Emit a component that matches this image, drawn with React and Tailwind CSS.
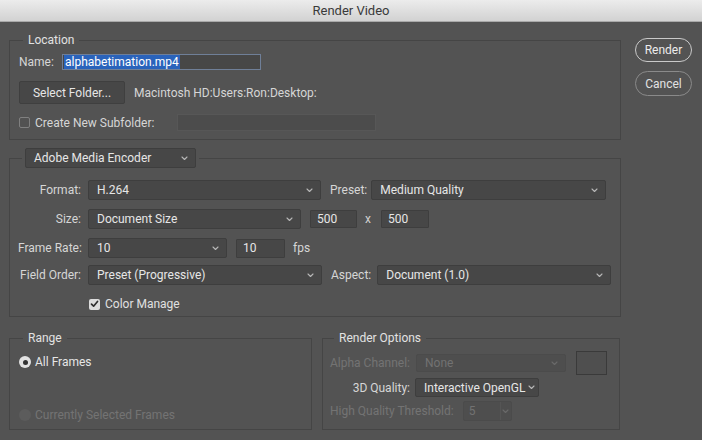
import React from "react";

const Chevron = ({ dim }) => (
  <svg width="7" height="5" viewBox="0 0 7 5" fill="none" className="shrink-0">
    <path
      d="M1 1l2.5 2.5L6 1"
      stroke={dim ? "#6a6a6a" : "#b8b8b8"}
      strokeWidth="1.1"
      strokeLinecap="round"
      strokeLinejoin="round"
    />
  </svg>
);

const Select = ({ value, className = "", disabled }) => (
  <div
    className={`flex shrink-0 items-center justify-between gap-[3px] rounded-[2px] border pl-[8px] pr-[7px] ${
      disabled
        ? "border-[#4b4b4b] bg-[#4e4e4e] text-[#727272]"
        : "border-[#3e3e3e] bg-[#474747] text-[#e6e6e6]"
    } ${className}`}
  >
    <span className="whitespace-nowrap">{value}</span>
    <Chevron dim={disabled} />
  </div>
);

const Field = ({ value, className = "" }) => (
  <div
    className={`flex shrink-0 items-center rounded-[1px] border border-[#3e3e3e] bg-[#474747] pl-[6px] text-[#e6e6e6] ${className}`}
  >
    {value}
  </div>
);

const Label = ({ children, className = "" }) => (
  <span className={`shrink-0 whitespace-nowrap text-right text-[#d6d6d6] ${className}`}>{children}</span>
);

const Checkbox = ({ checked }) =>
  checked ? (
    <div className="flex h-[11px] w-[11px] shrink-0 items-center justify-center rounded-[2px] bg-[#dcdcdc]">
      <svg width="9" height="8" viewBox="0 0 9 8" fill="none">
        <path d="M1.5 4.2L3.6 6.2L7.5 1.5" stroke="#2e2e2e" strokeWidth="1.7" strokeLinecap="round" strokeLinejoin="round" />
      </svg>
    </div>
  ) : (
    <div className="h-[11px] w-[11px] shrink-0 rounded-[2px] border border-[#808080] bg-[#525252]" />
  );

const Radio = ({ checked }) =>
  checked ? (
    <div className="flex h-[12px] w-[12px] shrink-0 items-center justify-center rounded-full bg-[#e2e2e2]">
      <div className="h-[5px] w-[5px] rounded-full bg-[#333333]" />
    </div>
  ) : (
    <div className="h-[12px] w-[12px] shrink-0 rounded-full bg-[#5c5c5c]" />
  );

const Legend = ({ children }) => (
  <legend className="ml-[4px] px-[5px] leading-[14px] text-[#e2e2e2]">{children}</legend>
);

export default function App() {
  return (
    <div className="h-[440px] w-[702px] overflow-hidden bg-[#535353] font-['Roboto',sans-serif] text-[12px] text-[#e2e2e2]">
      {/* title bar */}
      <div className="flex h-[22px] items-center justify-center border-b border-[#a9a9a9] bg-gradient-to-b from-[#ececec] to-[#d2d2d2] text-[13px] text-[#3a3a3a]">
        Render Video
      </div>

      <div className="flex pl-[9px]">
        <div className="flex w-[612px] flex-col">
          {/* Location */}
          <fieldset className="mt-[11px] border border-[#454545] pb-[8px] pl-[9px] pt-[7px]">
            <Legend>Location</Legend>
            <div className="flex h-[16px] items-center">
              <span className="w-[43px] shrink-0 text-[#d6d6d6]">Name:</span>
              <div className="flex h-[16px] w-[199px] items-center border border-[#6f7f98] bg-[#474747] pl-[1px]">
                <span className="bg-[#2a63bb] px-[1px] leading-[14px] text-white">alphabetimation.mp4</span>
              </div>
            </div>
            <div className="mt-[11px] flex h-[23px] items-center">
              <div className="flex h-[23px] w-[106px] items-center justify-center rounded-[2px] border border-[#3f3f3f] bg-[#474747] text-[#e6e6e6]">
                Select Folder...
              </div>
              <span className="ml-[9px] text-[#d6d6d6]">Macintosh HD:Users:Ron:Desktop:</span>
            </div>
            <div className="mt-[10px] flex h-[17px] items-center">
              <Checkbox />
              <span className="ml-[5px] w-[142px] shrink-0 text-[#d6d6d6]">Create New Subfolder:</span>
              <div className="h-[17px] w-[199px] border border-[#575757] bg-[#4c4c4c]" />
            </div>
          </fieldset>

          {/* Encoder settings */}
          <fieldset className="mt-[8px] border border-[#454545] pb-[5px] pl-[9px] pt-[12px]">
            <legend className="ml-[3px] px-[3px]">
              <Select value="Adobe Media Encoder" className="h-[20px] w-[171px]" />
            </legend>
            <div className="flex h-[20px] items-center">
              <Label className="w-[62px]">Format:</Label>
              <Select value="H.264" className="ml-[7px] h-[20px] w-[233px]" />
              <Label className="ml-[9px]">Preset:</Label>
              <Select value="Medium Quality" className="ml-[4px] h-[20px] w-[235px]" />
            </div>
            <div className="mt-[9px] flex h-[20px] items-center">
              <Label className="w-[62px]">Size:</Label>
              <Select value="Document Size" className="ml-[7px] h-[20px] w-[213px]" />
              <Field value="500" className="ml-[9px] h-[18px] w-[47px]" />
              <span className="ml-[8px] text-[#cfcfcf]">x</span>
              <Field value="500" className="ml-[10px] h-[18px] w-[48px]" />
            </div>
            <div className="mt-[9px] flex h-[20px] items-center">
              <Label className="-ml-[1px] w-[63px]">Frame Rate:</Label>
              <Select value="10" className="ml-[7px] h-[20px] w-[139px]" />
              <Field value="10" className="ml-[9px] h-[19px] w-[49px]" />
              <span className="ml-[8px] text-[#d6d6d6]">fps</span>
            </div>
            <div className="mt-[7px] flex h-[20px] items-center">
              <Label className="w-[62px]">Field Order:</Label>
              <Select value="Preset (Progressive)" className="ml-[7px] h-[20px] w-[234px]" />
              <Label className="ml-[9px]">Aspect:</Label>
              <Select value="Document (1.0)" className="ml-[6px] h-[20px] w-[234px]" />
            </div>
            <div className="mt-[12px] flex h-[14px] items-center pl-[70px]">
              <Checkbox checked />
              <span className="ml-[5px] text-[#e0e0e0]">Color Manage</span>
            </div>
          </fieldset>

          {/* bottom groups */}
          <div className="mt-[14px] flex">
            <fieldset className="w-[303px] border border-[#454545] pb-[7px] pl-[9px] pt-[10px]">
              <Legend>Range</Legend>
              <div className="flex h-[14px] items-center">
                <Radio checked />
                <span className="ml-[4px] text-[#e6e6e6]">All Frames</span>
              </div>
              <div className="mt-[39px] flex h-[14px] items-center">
                <Radio />
                <span className="ml-[4px] text-[#737373]">Currently Selected Frames</span>
              </div>
            </fieldset>

            <fieldset className="ml-[10px] w-[298px] border border-[#454545] pb-[6px] pl-[7px] pt-[6px]">
              <Legend>Render Options</Legend>
              <div className="flex h-[24px] items-center">
                <span className="w-[80px] shrink-0 text-right text-[#737373]">Alpha Channel:</span>
                <Select value="None" disabled className="ml-[6px] h-[18px] w-[150px]" />
                <div className="ml-[10px] h-[24px] w-[31px] border border-[#3a3a3a] bg-[#4f4f4f]" />
              </div>
              <div className="mt-[3px] flex h-[19px] items-center">
                <Label className="w-[80px]">3D Quality:</Label>
                <Select value="Interactive OpenGL" className="ml-[5px] h-[19px] w-[124px] pl-[6px] pr-[4px]" />
              </div>
              <div className="mt-[4px] flex h-[20px] items-center">
                <span className="shrink-0 text-[#737373]">High Quality Threshold:</span>
                <div className="ml-[9px] flex h-[20px] w-[49px] items-stretch rounded-[2px] border border-[#4b4b4b] bg-[#4e4e4e] text-[#727272]">
                  <span className="flex w-[37px] items-center border-r border-[#555555] pl-[5px]">5</span>
                  <span className="flex flex-1 items-center justify-center">
                    <Chevron dim />
                  </span>
                </div>
              </div>
            </fieldset>
          </div>
        </div>

        {/* buttons */}
        <div className="ml-[14px] flex flex-col pt-[16px]">
          <div className="flex h-[24px] w-[57px] items-center justify-center rounded-full border border-[#c9c9c9] text-[#ececec]">
            Render
          </div>
          <div className="mt-[9px] flex h-[25px] w-[57px] items-center justify-center rounded-full border border-[#8a8a8a] text-[#e2e2e2]">
            Cancel
          </div>
        </div>
      </div>
    </div>
  );
}
